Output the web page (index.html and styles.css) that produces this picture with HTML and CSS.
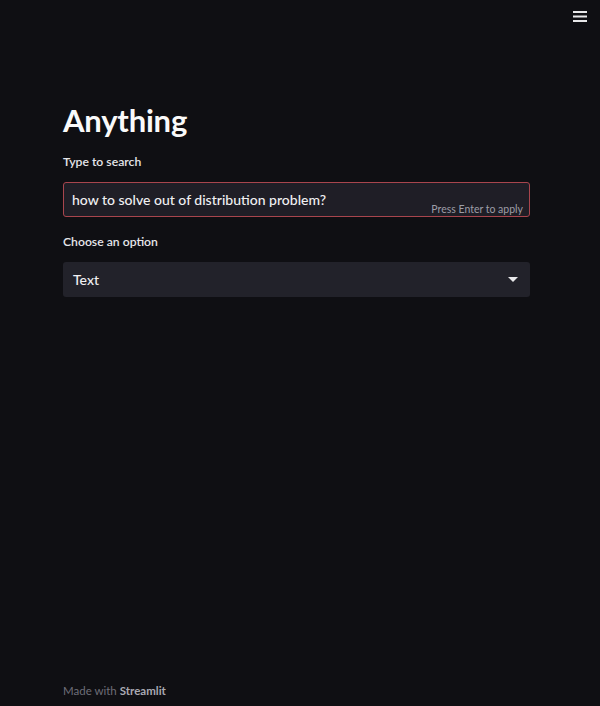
FILE: index.html
```html
<!DOCTYPE html>
<html>
<head>
<meta charset="utf-8">
<link rel="stylesheet" href="styles.css">
</head>
<body>
<header class="topbar">
  <button class="menu" aria-label="menu">
    <svg width="14" height="11" viewBox="0 0 14 11"><rect x="0" y="0" width="14" height="2" fill="#e8e8ea"/><rect x="0" y="4.5" width="14" height="2" fill="#e8e8ea"/><rect x="0" y="9" width="14" height="2" fill="#e8e8ea"/></svg>
  </button>
</header>
<main class="main">
  <h1 class="title">Anything</h1>
  <div class="field">
    <label class="label">Type to search</label>
    <div class="input active">
      <span class="value">how to solve out of distribution problem?</span>
      <span class="hint">Press Enter to apply</span>
    </div>
  </div>
  <div class="field">
    <label class="label">Choose an option</label>
    <div class="input select">
      <span class="value">Text</span>
      <svg class="caret" width="10" height="6" viewBox="0 0 10 6"><path d="M0 0 L10 0 L5 5 Z" fill="#e8e8ea"/></svg>
    </div>
  </div>
</main>
<footer class="footer">Made with <strong>Streamlit</strong></footer>
</body>
</html>
```
FILE: styles.css
```css
html, body {
  margin: 0;
  padding: 0;
  height: 100%;
}
body {
  background: #0f0f13;
  color: #f2f2f4;
  font-family: "Lato", "Open Sans", sans-serif;
  display: flex;
  flex-direction: column;
  height: 706px;
  box-sizing: border-box;
  overflow: hidden;
}
.topbar {
  display: flex;
  justify-content: flex-end;
  padding: 11px 13px 0 0;
  height: 30px;
  box-sizing: border-box;
}
.menu {
  background: none;
  border: none;
  padding: 0;
  width: 14px;
  height: 11px;
  display: flex;
}
.main {
  flex: 1;
  padding: 70px 70px 0 63px;
  display: flex;
  flex-direction: column;
}
.title {
  margin: 0;
  font-size: 31px;
  font-weight: 700;
  line-height: 40px;
  color: #fafafa;
  letter-spacing: -0.2px;
}
.field {
  display: flex;
  flex-direction: column;
  margin-top: 13px;
}
.field + .field {
  margin-top: 16px;
}
.label {
  font-size: 12.2px;
  font-weight: 600;
  color: #e6e6ea;
  line-height: 18px;
  margin-bottom: 11px;
}
.input {
  position: relative;
  height: 35px;
  background: #22222a;
  border-radius: 3px;
  box-sizing: border-box;
  display: flex;
  align-items: center;
  padding: 0 8px;
}
.input.active {
  border: 1px solid #a8454d;
  background: #1f1e26;
}
.value {
  font-size: 14px;
  font-weight: 500;
  color: #f0f0f2;
}
.select {
  padding: 0 12px 0 10px;
  justify-content: space-between;
}
.hint {
  position: absolute;
  right: 6px;
  bottom: 1px;
  font-size: 10.5px;
  color: #9d9da6;
}
.caret {
  display: block;
}
.footer {
  padding: 0 0 8px 63px;
  font-size: 11.5px;
  color: #6e6e78;
  line-height: 14px;
}
.footer strong {
  color: #a9a9b2;
  font-weight: 700;
}
```
